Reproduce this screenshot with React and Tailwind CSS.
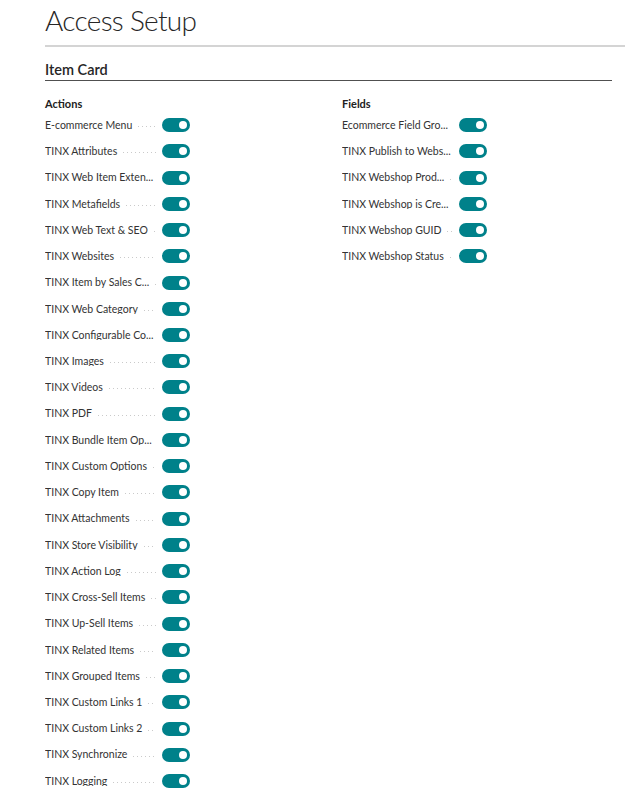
const actions = [
  'E-commerce Menu',
  'TINX Attributes',
  'TINX Web Item Exten...',
  'TINX Metafields',
  'TINX Web Text & SEO',
  'TINX Websites',
  'TINX Item by Sales C...',
  'TINX Web Category',
  'TINX Configurable Co...',
  'TINX Images',
  'TINX Videos',
  'TINX PDF',
  'TINX Bundle Item Op...',
  'TINX Custom Options',
  'TINX Copy Item',
  'TINX Attachments',
  'TINX Store Visibility',
  'TINX Action Log',
  'TINX Cross-Sell Items',
  'TINX Up-Sell Items',
  'TINX Related Items',
  'TINX Grouped Items',
  'TINX Custom Links 1',
  'TINX Custom Links 2',
  'TINX Synchronize',
  'TINX Logging',
];

const fields = [
  'Ecommerce Field Gro...',
  'TINX Publish to Webs...',
  'TINX Webshop Prod...',
  'TINX Webshop is Cre...',
  'TINX Webshop GUID',
  'TINX Webshop Status',
];

const Toggle = () => (
  <div className="w-[28px] h-[14px] rounded-full bg-[#00818a] flex items-center justify-end pr-[3px] shrink-0">
    <div className="w-[8px] h-[8px] rounded-full bg-white" />
  </div>
);

const Row = ({ label }) => (
  <div className="h-[26.24px] flex items-center">
    <div className="w-[111px] flex items-center mr-[6px] overflow-hidden">
      <span className="text-[10.5px] text-[#333] whitespace-nowrap leading-none">{label}</span>
      <div className="flex-1 ml-[6px] h-px mt-[3px] bg-[linear-gradient(to_right,#cacaca_1px,transparent_1px)] bg-[length:4px_1px] bg-repeat-x" />
    </div>
    <Toggle />
  </div>
);

const Column = ({ title, items }) => (
  <div className="w-[297px] shrink-0">
    <div className="text-[11px] font-bold text-[#212121] h-[17px] leading-[17px]">{title}</div>
    <div>
      {items.map((item) => (
        <Row key={item} label={item} />
      ))}
    </div>
  </div>
);

export default function App() {
  return (
    <div className="w-[630px] h-[805px] bg-white pl-[45px] pr-[5px] font-['Lato','Open_Sans',sans-serif] overflow-hidden">
      <h1 className="text-[28px] tracking-[-0.7px] font-light text-[#262626] leading-none pt-[6px] h-[45px]">Access Setup</h1>
      <div className="h-[2px] bg-[#d4d4d4]" />
      <div className="mr-[13px] mt-[15px] border-b border-[#505050] pb-[2px]">
        <h2 className="text-[14.5px] font-semibold text-[#262626] leading-[16px]">Item Card</h2>
      </div>
      <div className="flex mt-[14px]">
        <Column title="Actions" items={actions} />
        <Column title="Fields" items={fields} />
      </div>
    </div>
  );
}
